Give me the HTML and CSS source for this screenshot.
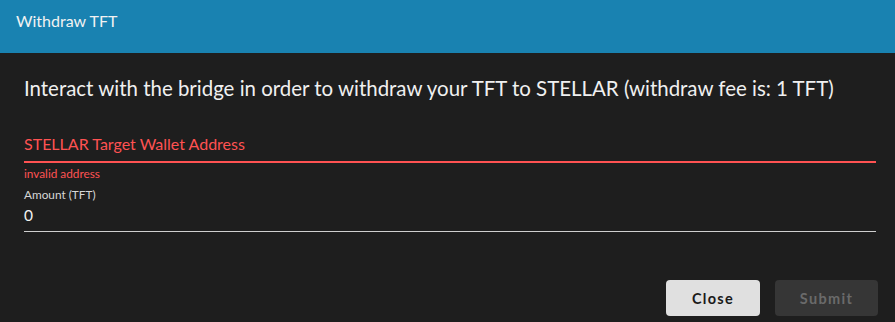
FILE: index.html
```html
<!DOCTYPE html>
<html>
<head>
<meta charset="utf-8">
<link rel="stylesheet" href="styles.css">
</head>
<body>
<div class="dialog">
  <div class="header">Withdraw TFT</div>
  <div class="content">
    <p class="intro">Interact with the bridge in order to withdraw your TFT to STELLAR (withdraw fee is: 1 TFT)</p>
    <div class="field">
      <div class="input-line error-line"><span class="placeholder">STELLAR Target Wallet Address</span></div>
      <div class="msg">invalid address</div>
    </div>
    <div class="field">
      <div class="label">Amount (TFT)</div>
      <div class="input-line value">0</div>
    </div>
  </div>
  <div class="actions">
    <button class="btn close">Close</button>
    <button class="btn submit" disabled>Submit</button>
  </div>
</div>
</body>
</html>
```

FILE: styles.css
```css
* { box-sizing: border-box; }
html, body { margin: 0; padding: 0; }
body {
  width: 895px;
  height: 322px;
  background: #1e1e1e;
  font-family: Lato, "Open Sans", sans-serif;
  overflow: hidden;
}
.dialog { display: flex; flex-direction: column; height: 322px; }
.header {
  height: 53px;
  background: #1982b1;
  color: #f2f2f2;
  font-size: 16px;
  padding: 11px 16px 0;
  line-height: 20px;
}
.content { padding: 0 19px 0 24px; }
.intro {
  margin: 23px 0 33px;
  color: #f0f0f0;
  font-size: 20.45px;
  line-height: 24px;
}
.input-line {
  border-bottom: 1px solid #cfcfcf;
}
.error-line {
  border-bottom: 2px solid #ff5252;
  height: 30px;
}
.placeholder {
  color: #ff5252;
  font-size: 16px;
  line-height: 22px;
}
.msg {
  color: #ff5252;
  font-size: 11.8px;
  line-height: 14px;
  margin-top: 4px;
}
.label {
  color: #d6d6d6;
  font-size: 11.8px;
  line-height: 14px;
  margin-top: 7px;
}
.value {
  color: #f2f2f2;
  font-size: 15.5px;
  line-height: 20px;
  height: 30px;
  padding-top: 3px;
}
.actions {
  display: flex;
  justify-content: flex-end;
  gap: 15px;
  padding: 0 17px 0 0;
  margin-top: 48px;
}
.btn {
  height: 36px;
  border: none;
  border-radius: 4px;
  font-family: Lato, "Open Sans", sans-serif;
  font-weight: bold;
  font-size: 14.5px;
  letter-spacing: 1.3px;
  padding: 0;
}
.close {
  width: 94px;
  background: #e0e0e0;
  color: #1a1a1a;
}
.submit {
  width: 103px;
  background: #363636;
  color: #6a6a6a;
}
```
